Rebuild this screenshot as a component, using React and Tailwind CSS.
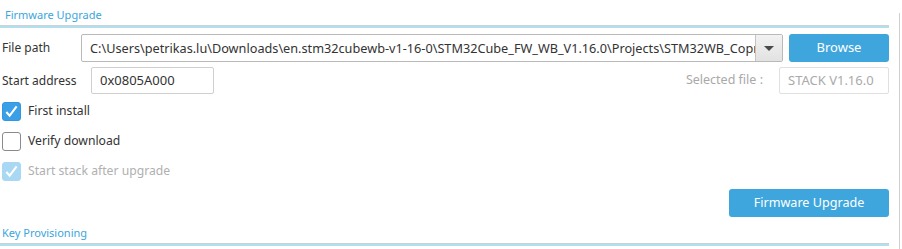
import { useState } from "react";

function Check({ checked, disabled }) {
    return (
        <span
            className={`flex h-[19px] w-[19px] items-center justify-center rounded-[3px] border ${
                disabled
                    ? "border-[#a9d8f5] bg-[#a9d8f5]"
                    : checked
                    ? "border-[#3197e0] bg-[#3a9fe6]"
                    : "border-[#8a8a8a] bg-white"
            }`}
        >
            {checked && (
                <svg viewBox="0 0 16 16" className="h-[15px] w-[15px]" fill="none" stroke="white" strokeWidth="2.2">
                    <path d="M2.5 8.5l3.5 4L13.5 2.5" />
                </svg>
            )}
        </span>
    );
}

function SectionTitle({ children, indent }) {
    return (
        <div>
            <div className={`${indent} text-[11px] leading-[16px] text-[#3aa6dc]`}>{children}</div>
            <div className="mt-[2px] h-[1px] w-[889px] bg-[#c9d2d6]" />
            <div className="h-[2px] w-[889px] bg-[#b3dfec]" />
        </div>
    );
}

export default function App() {
    const [first, setFirst] = useState(true);
    const [verify, setVerify] = useState(false);

    return (
        <div
            className="relative h-[249px] w-[902px] overflow-hidden bg-white text-[13px] text-[#333]"
            style={{ fontFamily: '"Segoe UI", "Noto Sans", "Open Sans", sans-serif' }}
        >
            {/* right border of scroll area */}
            <div className="absolute right-[2px] top-[13px] h-[236px] w-[1px] bg-[#d0d0d0]" />

            <div className="pt-[7px]">
                <SectionTitle indent="pl-[5px]">Firmware Upgrade</SectionTitle>
            </div>

            {/* File path */}
            <div className="mt-[6px] flex h-[28px] items-center">
                <span className="w-[81px] pl-[2px] text-[12px]">File path</span>
                <div className="flex h-[28px] w-[702px] items-stretch rounded-[2px] border border-[#b9b9b9] bg-white">
                    <div className="flex-1 overflow-hidden whitespace-nowrap pl-[8px] text-[12.7px] leading-[26px]">
                        C:\Users\petrikas.lu\Downloads\en.stm32cubewb-v1-16-0\STM32Cube_FW_WB_V1.16.0\Projects\STM32WB_Copro_Wireless_Binaries
                    </div>
                    <div className="flex w-[27px] items-center justify-center border-l border-[#c4c4c4] bg-gradient-to-b from-[#f2f2f2] to-[#e2e2e2]">
                        <span className="h-0 w-0 border-x-[5px] border-t-[5px] border-x-transparent border-t-[#4a4a4a]" />
                    </div>
                </div>
                <button className="ml-[6px] h-[28px] w-[100px] rounded-[3px] bg-[#3ea6dc] text-white">
                    Browse
                </button>
            </div>

            {/* Start address */}
            <div className="mt-[5px] flex h-[27px] items-center">
                <span className="w-[91px] pl-[2px] text-[12px]">Start address</span>
                <div className="flex h-[27px] w-[123px] items-center rounded-[2px] border border-[#cfcfcf] pl-[8px]">
                    0x0805A000
                </div>
                <span className="ml-auto mr-[16px] text-[12.5px] text-[#a9a9a9]">Selected file :</span>
                <div className="mr-[13px] flex h-[27px] w-[110px] items-center rounded-[2px] border border-[#e0e0e0] pl-[8px] text-[#aaaaaa]">
                    STACK V1.16.0
                </div>
            </div>

            {/* Checkboxes */}
            <div className="mt-[8px] flex flex-col gap-[11px] pl-[2px] text-[12.2px]">
                <label className="flex h-[19px] items-center gap-[7px]" onClick={() => setFirst(!first)}>
                    <Check checked={first} />
                    <span>First install</span>
                </label>
                <label className="flex h-[19px] items-center gap-[7px]" onClick={() => setVerify(!verify)}>
                    <Check checked={verify} />
                    <span>Verify download</span>
                </label>
                <label className="flex h-[19px] items-center gap-[7px]">
                    <Check checked disabled />
                    <span className="text-[#b0b0b0]">Start stack after upgrade</span>
                </label>
            </div>

            <div className="mt-[8px] flex h-[28px] w-[889px] justify-end">
                <button className="h-[28px] w-[160px] rounded-[3px] bg-[#3ea6dc] text-[12.6px] text-white">
                    Firmware Upgrade
                </button>
            </div>

            <div className="mt-[8px]">
                <SectionTitle indent="pl-[2px]">Key Provisioning</SectionTitle>
            </div>
        </div>
    );
}
